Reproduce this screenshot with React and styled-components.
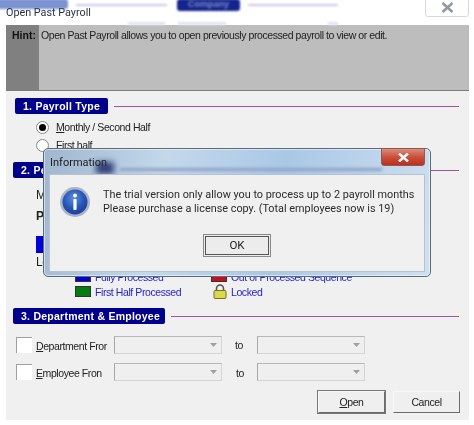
import React from "react";
import styled, { createGlobalStyle } from "styled-components";

const GlobalStyle = createGlobalStyle`
  html, body {
    margin: 0;
    padding: 0;
    background: #fff;
  }
  * {
    box-sizing: border-box;
  }
`;

function InfoIcon() {
  return (
    <IconSvg width="32" height="32" viewBox="0 0 32 32">
      <defs>
        <radialGradient id="infoFill" cx="45%" cy="35%" r="70%">
          <stop offset="0%" stopColor="#5b8ee0" />
          <stop offset="60%" stopColor="#2753b4" />
          <stop offset="100%" stopColor="#1b3c98" />
        </radialGradient>
      </defs>
      <circle cx="16" cy="16" r="15" fill="#a9b4c6" />
      <circle cx="16" cy="16" r="12.5" fill="url(#infoFill)" />
      <circle cx="16" cy="9.5" r="2" fill="#fff" />
      <rect x="14.4" y="13" width="3.2" height="11" rx="1" fill="#fff" />
    </IconSvg>
  );
}

function LockIcon() {
  return (
    <svg width="14" height="15" viewBox="0 0 14 15">
      <path d="M3.5 7V4.5a3.5 3.5 0 0 1 7 0V7" fill="none" stroke="#55554a" strokeWidth="1.6" />
      <rect x="1" y="6.5" width="12" height="8" rx="1" fill="#dcd84a" stroke="#77732a" />
    </svg>
  );
}

function Arrow() {
  return (
    <svg width="7" height="4" viewBox="0 0 7 4">
      <path d="M0 0h7L3.5 4z" fill="#a0a0a0" />
    </svg>
  );
}

function Under({ children }) {
  return <u>{children}</u>;
}

function RangeRow({ first, rest, top, toShift }) {
  return (
    <Row $top={top}>
      <CheckBox />
      <RowLabel>
        <Under>{first}</Under>
        {rest}
      </RowLabel>
      <Select>
        <Arrow />
      </Select>
      <ToLabel $shift={toShift}>to</ToLabel>
      <Select>
        <Arrow />
      </Select>
    </Row>
  );
}

export default function App() {
  return (
    <>
      <GlobalStyle />
      <Page>
        <TitleBar>
          <BlurPill $left={-6} $width={74} $height={10} $color="#7d92d0" />
          <BlurPill $left={177} $width={63} $height={12} $color="#14248c">
            Company
          </BlurPill>
          <BlurLine $left={76} $width={91} $top={4} />
          <BlurLine $left={248} $width={90} $top={4} />
          <BlurLine $left={128} $width={37} $top={22} $faint />
          <BlurLine $left={178} $width={48} $top={22} $faint />
          <BlurLine $left={328} $width={10} $top={22} $faint />
          <WindowTitle>Open Past Payroll</WindowTitle>
          <WindowClose>
            <svg width="13" height="11" viewBox="0 0 13 11">
              <path d="M1.5 1l10 9M11.5 1l-10 9" stroke="#8f969c" strokeWidth="2.4" />
            </svg>
          </WindowClose>
        </TitleBar>

        <Panel>
          <HintBar>
            <HintLabel>Hint:</HintLabel>
            <HintText>Open Past Payroll allows you to open previously processed payroll to view or edit.</HintText>
          </HintBar>

          <SectionHead $top={7} $left={9}>
            <SectionTitle $width={93}>1. Payroll Type</SectionTitle>
            <SectionLine />
          </SectionHead>
          <RadioRow $top={6}>
            <Radio $checked />
            <span>
              <Under>M</Under>onthly / Second Half
            </span>
          </RadioRow>
          <RadioRow $top={4}>
            <Radio />
            <span>First half</span>
          </RadioRow>

          <SectionHead $top={10} $left={7}>
            <SectionTitle $width={152}>2. Period</SectionTitle>
            <SectionLine />
          </SectionHead>
          <PeriodBlock>
            <span>Month</span>
            <b>Period</b>
            <BlueBox />
            <span>Locked</span>
          </PeriodBlock>

          <Legend>
            <LegendItem>
              <Swatch $color="#0000d8" />
              Fully Processed
            </LegendItem>
            <LegendItem>
              <Swatch $color="#cc0f14" />
              Out of Processed Sequence
            </LegendItem>
            <LegendItem>
              <Swatch $color="#007c10" />
              First Half Processed
            </LegendItem>
            <LegendItem>
              <LockSlot>
                <LockIcon />
              </LockSlot>
              Locked
            </LegendItem>
          </Legend>

          <SectionHead $top={10} $left={7}>
            <SectionTitle $width={152}>3. Department &amp; Employee</SectionTitle>
            <SectionLine />
          </SectionHead>
          <RangeRow first="D" rest="epartment Fror" top={12} />
          <RangeRow first="E" rest="mployee Fron" top={9} toShift={1} />

          <ButtonRow>
            <DialogButton $default>
              <Under>O</Under>pen
            </DialogButton>
            <DialogButton>Cancel</DialogButton>
          </ButtonRow>
        </Panel>

        <Modal>
          <ModalBleed />
          <ModalStreak />
          <ModalTitle>Information</ModalTitle>
          <ModalClose>
            <svg width="11" height="9" viewBox="0 0 11 9">
              <path d="M1 .5l9 8M10 .5l-9 8" stroke="#fff" strokeWidth="2.4" />
            </svg>
          </ModalClose>
          <ModalBody>
            <MessageRow>
              <InfoIcon />
              <Message>
                The trial version only allow you to process up to 2 payroll months
                <br />
                Please purchase a license copy. (Total employees now is 19)
              </Message>
            </MessageRow>
            <OkButton>OK</OkButton>
          </ModalBody>
        </Modal>
      </Page>
    </>
  );
}

const Page = styled.div`
  position: relative;
  width: 474px;
  height: 425px;
  overflow: hidden;
  background: #fff;
  font-family: "Liberation Sans", Arial, sans-serif;
  font-size: 10.5px;
  letter-spacing: -0.42px;
  color: #222;
  filter: blur(0.45px);
`;

const IconSvg = styled.svg`
  flex-shrink: 0;
`;

const TitleBar = styled.div`
  position: relative;
  height: 25px;
  padding-left: 6px;
  display: flex;
  align-items: flex-end;
`;

const BlurPill = styled.div`
  position: absolute;
  top: -1px;
  left: ${(p) => p.$left}px;
  width: ${(p) => p.$width}px;
  height: ${(p) => p.$height}px;
  border-radius: 3px;
  background: ${(p) => p.$color};
  color: #7f8cc8;
  font-size: 9px;
  font-weight: bold;
  letter-spacing: 0;
  line-height: 10px;
  text-align: center;
  filter: blur(1.2px);
`;

const BlurLine = styled.div`
  position: absolute;
  top: ${(p) => p.$top}px;
  left: ${(p) => p.$left}px;
  width: ${(p) => p.$width}px;
  height: ${(p) => (p.$faint ? 3 : 2)}px;
  background: ${(p) => (p.$faint ? "#dfe3ec" : "#d2c4ee")};
  filter: blur(${(p) => (p.$faint ? 1.2 : 0.9)}px);
`;

const WindowTitle = styled.div`
  position: relative;
  font-family: Roboto, sans-serif;
  font-size: 10.8px;
  letter-spacing: 0;
  line-height: 18px;
  margin-bottom: 3px;
  color: #2a3540;
`;

const WindowClose = styled.div`
  position: absolute;
  top: -2px;
  right: 5px;
  width: 44px;
  height: 19px;
  display: flex;
  align-items: center;
  justify-content: center;
  background: #fff;
  border: 1px solid #d9d9d9;
  border-radius: 0 0 3px 3px;
`;

const Panel = styled.div`
  width: 463px;
  height: 395px;
  margin-left: 6px;
  display: flex;
  flex-direction: column;
  background: #f0f0f0;
`;

const HintBar = styled.div`
  display: flex;
  height: 66px;
  flex-shrink: 0;
  background: #bdbdbd;
  border-bottom: 1px solid #7d7d7d;
`;

const HintLabel = styled.div`
  width: 33px;
  padding: 4px 0 0 6px;
  background: #808080;
  color: #111;
  font-weight: bold;
  letter-spacing: 0;
`;

const HintText = styled.div`
  padding: 4px 0 0 2px;
  color: #222;
`;

const SectionHead = styled.div`
  display: flex;
  align-items: center;
  flex-shrink: 0;
  margin-top: ${(p) => p.$top}px;
  padding: 0 10px 0 ${(p) => p.$left}px;
`;

const SectionTitle = styled.div`
  width: ${(p) => p.$width}px;
  height: 16px;
  padding-left: 8px;
  border-radius: 2px;
  background: #00008b;
  color: #fff;
  font-weight: bold;
  font-size: 10.5px;
  line-height: 16px;
  letter-spacing: 0.25px;
  white-space: nowrap;
`;

const SectionLine = styled.div`
  flex: 1;
  height: 1px;
  margin-left: 6px;
  background: #a4539f;
`;

const RadioRow = styled.div`
  display: flex;
  align-items: center;
  gap: 7px;
  height: 14px;
  flex-shrink: 0;
  margin-top: ${(p) => p.$top}px;
  padding-left: 30px;
`;

const Radio = styled.span`
  position: relative;
  width: 13px;
  height: 13px;
  border-radius: 50%;
  background: #fff;
  border: 1px solid #8a8a8a;

  &::after {
    content: "";
    display: ${(p) => (p.$checked ? "block" : "none")};
    position: absolute;
    inset: 2px;
    border-radius: 50%;
    background: #000;
  }
`;

const PeriodBlock = styled.div`
  display: flex;
  flex-direction: column;
  align-items: flex-start;
  height: 92px;
  flex-shrink: 0;
  padding: 10px 0 0 30px;
  font-size: 12px;

  b {
    margin-top: 7px;
  }

  span:last-child {
    margin-top: 2px;
  }
`;

const BlueBox = styled.div`
  width: 40px;
  height: 17px;
  margin-top: 13px;
  background: #0000d8;
`;

const Legend = styled.div`
  display: grid;
  grid-template-columns: 136px 1fr;
  grid-auto-rows: 13px;
  row-gap: 2px;
  flex-shrink: 0;
  padding-left: 69px;
  color: #2424d0;
`;

const LegendItem = styled.div`
  display: flex;
  align-items: center;
  gap: 4px;
  white-space: nowrap;
`;

const Swatch = styled.span`
  width: 16px;
  height: 11px;
  flex-shrink: 0;
  background: ${(p) => p.$color};
  border: 1px solid #333;
`;

const LockSlot = styled.span`
  display: flex;
  width: 16px;
  padding-left: 2px;
`;

const Row = styled.div`
  display: flex;
  align-items: center;
  height: 18px;
  flex-shrink: 0;
  margin-top: ${(p) => p.$top}px;
  padding-left: 10px;
`;

const CheckBox = styled.span`
  width: 16px;
  height: 16px;
  flex-shrink: 0;
  background: #fff;
  border-top: 1px solid #a0a0a0;
  border-left: 1px solid #a0a0a0;
`;

const RowLabel = styled.span`
  width: 82px;
  flex-shrink: 0;
  padding: 2px 0 0 4px;
  white-space: nowrap;
`;

const Select = styled.div`
  width: 108px;
  height: 18px;
  flex-shrink: 0;
  display: flex;
  align-items: center;
  justify-content: flex-end;
  padding-right: 4px;
  background: #efefef;
  border: 1px solid #d4d4d4;
  border-left-color: #a8a8a8;
  border-top-color: #b8b8b8;
`;

const ToLabel = styled.span`
  width: 35px;
  padding-top: ${(p) => p.$shift || 0}px;
  padding-left: ${(p) => 13 + (p.$shift || 0)}px;
`;

const ButtonRow = styled.div`
  display: flex;
  justify-content: flex-end;
  gap: 8px;
  margin-top: 10px;
  padding-right: 9px;
`;

const DialogButton = styled.div`
  width: 67px;
  height: 22px;
  text-align: center;
  line-height: 20px;
  background: #efefef;
  border: 1px solid;
  border-color: #f8f8f8 #6b6b6b #6b6b6b #f8f8f8;
  box-shadow: ${(p) => (p.$default ? "0 0 0 1px #777" : "none")};
`;

const Modal = styled.div`
  position: absolute;
  left: 43px;
  top: 148px;
  width: 388px;
  height: 129px;
  padding: 25px 5px 5px;
  border: 1px solid #5d6b78;
  border-radius: 5px;
  background: linear-gradient(100deg, #9fb6cf 0%, #c4d8ea 30%, #a9c8e6 60%, #cfe0f0 100%);
  box-shadow: 0 0 0 1px rgba(255, 255, 255, 0.5) inset;
`;

const ModalBleed = styled.div`
  position: absolute;
  left: 52px;
  top: 13px;
  width: 18px;
  height: 12px;
  background: #303c78;
  filter: blur(3px);
`;

const ModalStreak = styled.div`
  position: absolute;
  left: 76px;
  top: 19px;
  width: 262px;
  height: 3px;
  background: #8f9fc8;
  filter: blur(1.5px);
`;

const ModalTitle = styled.div`
  position: absolute;
  left: 6px;
  top: 7px;
  font-family: Roboto, sans-serif;
  font-size: 11px;
  letter-spacing: 0;
  color: #1c1c1c;
`;

const ModalClose = styled.div`
  position: absolute;
  top: -1px;
  right: 5px;
  width: 44px;
  height: 18px;
  display: flex;
  align-items: center;
  justify-content: center;
  border-radius: 0 0 3px 3px;
  background: linear-gradient(#dd8c7c 0%, #c9503c 50%, #bf2f1c 100%);
  border: 1px solid #8d5a52;
`;

const ModalBody = styled.div`
  position: relative;
  height: 98px;
  display: flex;
  flex-direction: column;
  align-items: center;
  background: #f0f0f0;
  border: 1px solid #b6c2ce;
`;

const MessageRow = styled.div`
  align-self: stretch;
  display: flex;
  align-items: flex-start;
  gap: 12px;
  padding: 11px 0 0 9px;
`;

const Message = styled.div`
  padding-top: 2px;
  font-family: Roboto, sans-serif;
  font-size: 10.85px;
  letter-spacing: 0;
  line-height: 14px;
  color: #2b2b2b;
  white-space: nowrap;
`;

const OkButton = styled.div`
  width: 68px;
  height: 23px;
  margin-top: 16px;
  border: 1px solid #8a8a8a;
  outline: 1px solid #555;
  outline-offset: -3px;
  background: #ececec;
  text-align: center;
  line-height: 21px;
  font-family: Roboto, sans-serif;
  font-size: 11.5px;
  letter-spacing: 0;
`;
